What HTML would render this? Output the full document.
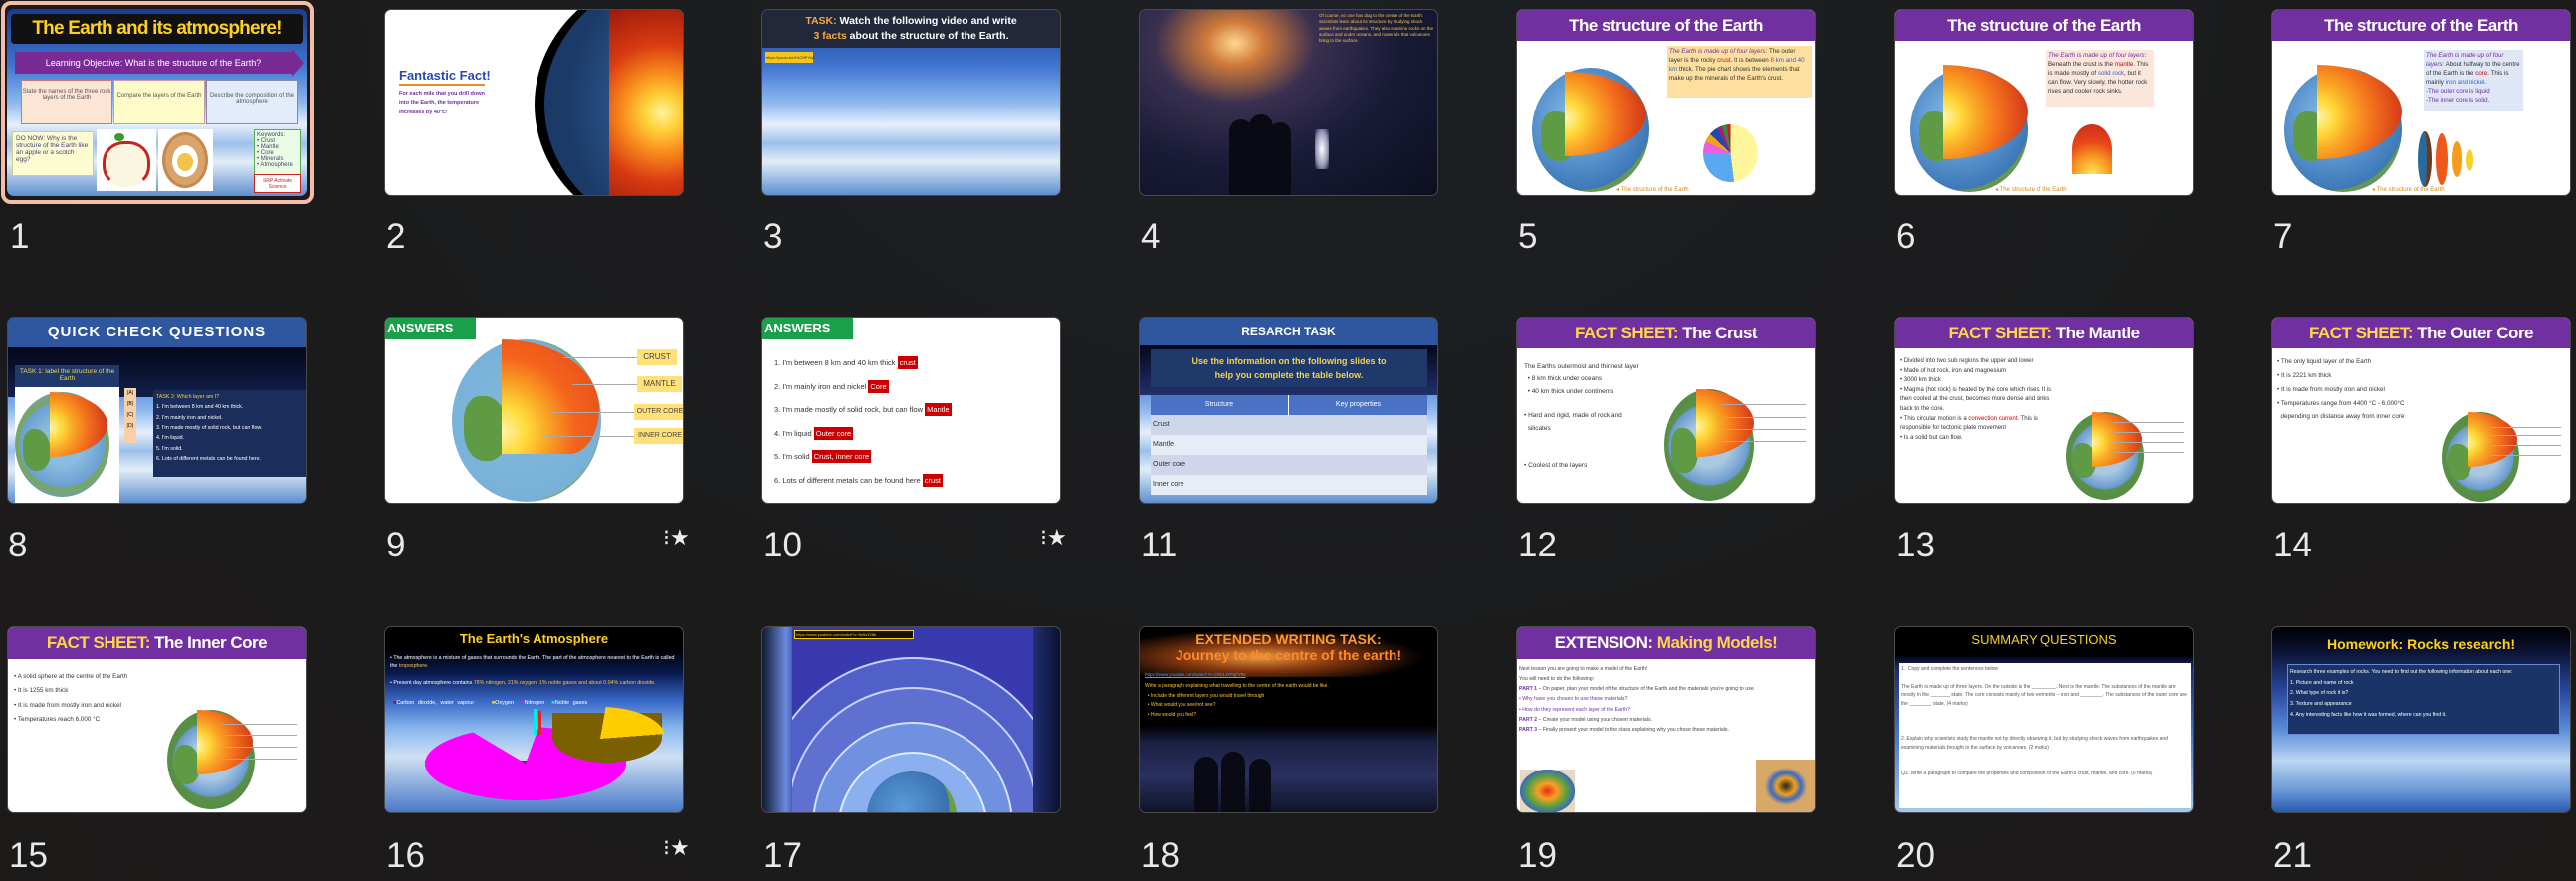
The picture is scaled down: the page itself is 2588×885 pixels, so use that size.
<!DOCTYPE html>
<html><head><meta charset="utf-8">
<style>
*{margin:0;padding:0;box-sizing:border-box}
html,body{width:2588px;height:885px;overflow:hidden}
body{background:radial-gradient(ellipse at 50% 0%,#1d2024 0%,#1b1b1c 55%,#1c1a19 100%);font-family:"Liberation Sans Narrow","Liberation Sans",sans-serif;position:relative}
.s{position:absolute;width:301px;height:188px;border-radius:7px;overflow:hidden;border:1px solid #4a4a4a;background:#fff}
.n{position:absolute;color:#e8e8e8;font-family:"Liberation Sans Narrow","Liberation Sans",sans-serif;font-size:35px;font-weight:300;line-height:1}
.st{position:absolute;color:#eee;font-size:22px}
.a{position:absolute}
.ph{position:absolute;left:0;top:0;width:100%;height:31px;background:#7030a0;color:#fff;font-weight:bold;font-size:17px;text-align:center;line-height:31px;white-space:nowrap;letter-spacing:-0.5px}
.ph b{color:#ffd34a}
.sky{background:linear-gradient(180deg,#1b3a8c 0%,#3f74d0 30%,#8db8ee 50%,#e6f0fb 62%,#9cc0ea 72%,#e2edf8 82%,#5e8fd0 100%)}
.earth{position:absolute;border-radius:50%;background:radial-gradient(circle at 40% 40%,#8fc0e8 0%,#5b95cf 40%,#3d78b8 70%,#6a9a4c 72%,#3d78b8 90%);overflow:hidden}
.earth:before{content:"";position:absolute;left:8%;top:35%;width:30%;height:40%;background:#5f9a45;border-radius:40% 60% 50% 50%}
.cut{position:absolute;border-radius:0 100% 100% 0/0 50% 50% 0;background:radial-gradient(circle at 0% 55%,#fff6b0 0%,#ffd93a 18%,#f9a825 34%,#f4731c 55%,#d9441a 80%,#b8321a 100%)}
.t{position:absolute;font-size:6px;color:#333;line-height:1.35}
.lab{position:absolute;height:1px;background:#aaa}
</style></head><body>

<!-- selection -->
<div class="a" style="left:1px;top:1px;width:314px;height:204px;border:4px solid #f6bca8;border-radius:10px"></div>

<!-- 1 -->
<div class="s sky" style="left:7px;top:9px;border:none">
 <div class="a" style="left:4px;top:5px;width:293px;height:30px;background:#111;border-radius:4px;color:#ffd11c;font-weight:bold;font-size:19px;text-align:center;line-height:30px;letter-spacing:-0.8px">The Earth and its atmosphere!</div>
 <div class="a" style="left:8px;top:43px;width:278px;height:22px;background:#7a2a94;color:#fff;font-size:9px;line-height:22px;text-align:center">Learning Objective: What is the structure of the Earth?</div>
 <div class="a" style="left:286px;top:40px;border-left:12px solid #7a2a94;border-top:14px solid transparent;border-bottom:14px solid transparent"></div>
 <div class="a" style="left:14px;top:71px;width:92px;height:45px;background:#fde5d6;border:1px solid #c77;font-size:6px;text-align:center;padding-top:8px;color:#555">State the names of the three rock layers of the Earth</div>
 <div class="a" style="left:107px;top:71px;width:92px;height:45px;background:#fdfbc8;border:1px solid #c9a;font-size:6px;text-align:center;padding-top:12px;color:#555">Compare the layers of the Earth</div>
 <div class="a" style="left:200px;top:71px;width:92px;height:45px;background:#e3ecfb;border:1px solid #88a;font-size:6px;text-align:center;padding-top:12px;color:#555">Describe the composition of the atmosphere</div>
 <div class="a" style="left:5px;top:123px;width:82px;height:45px;background:#fdfbd0;border:1px solid #cc9;font-size:6.5px;color:#447;padding:3px">DO NOW: Why is the structure of the Earth like an apple or a scotch egg?</div>
 <div class="a" style="left:90px;top:121px;width:60px;height:62px;background:#fff"><div class="a" style="left:6px;top:12px;width:48px;height:46px;border-radius:45%;background:#fbf6e0;border:3px solid #c92222;border-bottom-color:#fbf6e0"></div><div class="a" style="left:18px;top:4px;width:10px;height:8px;background:#3a9a2a;border-radius:50%"></div></div>
 <div class="a" style="left:152px;top:121px;width:55px;height:62px;background:#fff"><div class="a" style="left:4px;top:3px;width:46px;height:56px;border-radius:50%;background:#d9a46a;border:3px solid #c5884e"></div><div class="a" style="left:14px;top:16px;width:26px;height:32px;border-radius:50%;background:#fff"></div><div class="a" style="left:19px;top:24px;width:16px;height:18px;border-radius:50%;background:#f2c24a"></div></div>
 <div class="a" style="left:248px;top:121px;width:47px;height:57px;background:#eafbe6;border:1px solid #5a5;font-size:6px;color:#446;padding:2px">Keywords:<br>• Crust<br>• Mantle<br>• Core<br>• Minerals<br>• Atmosphere</div>
 <div class="a" style="left:248px;top:166px;width:47px;height:19px;background:#fff;border:1px solid #c22;font-size:5px;color:#c22;text-align:center;padding-top:3px">SRP Activate Science</div>
</div>
<div class="n" style="left:10px;top:220px">1</div>

<!-- 2 -->
<div class="s" style="left:386px;top:9px">
 <div class="a" style="left:150px;top:-40px;width:300px;height:270px;border-radius:50%;background:#000"></div>
 <div class="a" style="left:160px;top:-40px;width:300px;height:270px;border-radius:50%;background:radial-gradient(circle at 60% 50%,#4a7ab0 0%,#2d5a90 40%,#1c3a68 70%)"></div>
 <div class="a" style="left:225px;top:0;width:76px;height:188px;background:radial-gradient(circle at 70% 55%,#fff4a0 0%,#ffd23a 15%,#f88a1c 35%,#d83a12 60%,#9a1a0a 100%)"></div>
 <div class="a" style="left:14px;top:58px;color:#2c4ab0;font-weight:bold;font-size:13px">Fantastic Fact!</div>
 <div class="a" style="left:14px;top:74px;width:86px;height:2px;background:#f08a2a"></div>
 <div class="a" style="left:14px;top:80px;width:95px;color:#7030a0;font-weight:bold;font-size:5.5px;line-height:1.7">For each mile that you drill down into the Earth, the temperature increases by 40°c!</div>
</div>
<div class="n" style="left:388px;top:220px">2</div>

<!-- 3 -->
<div class="s sky" style="left:765px;top:9px">
 <div class="a" style="left:0;top:0;width:100%;height:38px;background:#22283a;color:#fff;font-weight:bold;font-size:10.5px;text-align:center;line-height:15px;padding-top:4px"><span style="color:#f6a93b">TASK:</span> Watch the following video and write<br><span style="color:#f6a93b">3 facts</span> about the structure of the Earth.</div>
 <div class="a" style="left:3px;top:42px;width:48px;height:11px;background:#f4c51a;font-size:4px;color:#333;padding:3px 1px">https://youtu.be/K4OIfPYkA</div>
</div>
<div class="n" style="left:767px;top:220px">3</div>

<!-- 4 -->
<div class="s" style="left:1144px;top:9px;background:radial-gradient(ellipse at 32% 18%,#ffd790 0%,#d07a3a 10%,#3a3050 28%,#1a1c38 55%,#0c0e20 100%)">
 <div class="a" style="left:90px;top:110px;width:24px;height:78px;background:#0a0a14;border-radius:12px 12px 0 0"></div>
 <div class="a" style="left:110px;top:105px;width:24px;height:83px;background:#0a0a14;border-radius:12px 12px 0 0"></div>
 <div class="a" style="left:130px;top:113px;width:22px;height:75px;background:#0a0a14;border-radius:12px 12px 0 0"></div>
 <div class="a" style="left:176px;top:120px;width:14px;height:40px;background:radial-gradient(#fff,#99b 60%,transparent)"></div>
 <div class="a" style="left:180px;top:3px;width:115px;color:#f5c542;font-size:4.5px;line-height:1.4">Of course, no one has dug to the centre of the Earth. Scientists learn about its structure by studying shock waves from earthquakes. They also examine rocks on the surface and under oceans, and materials that volcanoes bring to the surface.</div>
</div>
<div class="n" style="left:1146px;top:220px">4</div>

<!-- 5,6,7 -->
<div class="s" style="left:1523px;top:9px">
 <div class="ph">The structure of the Earth</div>
 <div class="earth" style="left:15px;top:58px;width:118px;height:125px"></div>
 <div class="cut" style="left:48px;top:62px;width:82px;height:85px"></div>
 <div class="a" style="left:151px;top:36px;width:145px;height:52px;background:#fde0a0;font-size:6.2px;color:#333;padding:2px;line-height:1.45"><i style="color:#7030a0">The Earth is made up of four layers:</i> The outer layer is the rocky <span style="color:#c00">crust</span>. It is between <span style="color:#36c">8 km and 40 km</span> thick. The pie chart shows the elements that make up the minerals of the Earth's crust.</div>
 <div class="a" style="left:187px;top:115px;width:55px;height:58px;border-radius:50%;background:conic-gradient(#fff59a 0 48%,#5aa8f0 48% 75%,#e860e0 75% 82%,#f0a020 82% 87%,#1a4ab0 87% 92%,#a02080 92% 95%,#3a8a3a 95% 98%,#c02020 98%)"></div>
 <div class="t" style="left:100px;top:177px;color:#d08a20">◂ The structure of the Earth</div>
</div>
<div class="n" style="left:1525px;top:220px">5</div>

<div class="s" style="left:1903px;top:9px">
 <div class="ph">The structure of the Earth</div>
 <div class="earth" style="left:15px;top:58px;width:118px;height:125px"></div>
 <div class="cut" style="left:48px;top:55px;width:85px;height:95px"></div>
 <div class="a" style="left:152px;top:40px;width:108px;height:57px;background:#fbe6dc;font-size:6.2px;color:#333;padding:2px;line-height:1.45"><i style="color:#7030a0">The Earth is made up of four layers:</i> Beneath the crust is the <span style="color:#c00">mantle</span>. This is made mostly of <span style="color:#36c">solid rock</span>, but it can flow. Very slowly, the hotter rock rises and cooler rock sinks.</div>
 <div class="a" style="left:178px;top:115px;width:40px;height:50px;border-radius:50% 50% 0 0;background:radial-gradient(circle at 50% 100%,#ffe860 0%,#f9a025 30%,#e84818 60%,#c8281a)"></div>
 <div class="t" style="left:100px;top:177px;color:#d08a20">◂ The structure of the Earth</div>
</div>
<div class="n" style="left:1905px;top:220px">6</div>

<div class="s" style="left:2282px;top:9px">
 <div class="ph">The structure of the Earth</div>
 <div class="earth" style="left:12px;top:58px;width:118px;height:125px"></div>
 <div class="cut" style="left:45px;top:55px;width:85px;height:95px"></div>
 <div class="a" style="left:152px;top:40px;width:100px;height:62px;background:#dfe6f6;font-size:6.2px;color:#333;padding:2px;line-height:1.45"><i style="color:#7030a0">The Earth is made up of four layers:</i> About halfway to the centre of the Earth is the <span style="color:#c00">core</span>. This is mainly <span style="color:#36c">iron and nickel</span>.<br><span style="color:#7030a0">-The outer core is liquid<br>-The inner core is solid.</span></div>
 <div class="a" style="left:146px;top:122px;width:14px;height:56px;border-radius:50%;background:#2a6a9a;border-right:5px solid #6a3a1a"></div>
 <div class="a" style="left:164px;top:124px;width:12px;height:52px;border-radius:50%;background:#f0581a"></div>
 <div class="a" style="left:180px;top:132px;width:10px;height:36px;border-radius:50%;background:#f89a1a"></div>
 <div class="a" style="left:194px;top:140px;width:8px;height:22px;border-radius:50%;background:#f8d02a"></div>
 <div class="t" style="left:100px;top:177px;color:#d08a20">◂ The structure of the Earth</div>
</div>
<div class="n" style="left:2284px;top:220px">7</div>

<!-- Row 2 -->
<!-- 8 -->
<div class="s sky" style="left:7px;top:318px">
 <div class="a" style="left:0;top:0;width:100%;height:30px;background:#2f57a0;color:#fff;font-weight:bold;font-size:15px;text-align:center;line-height:30px;letter-spacing:1px">QUICK CHECK QUESTIONS</div>
 <div class="a" style="left:0;top:30px;width:100%;height:50px;background:linear-gradient(#05071a,#10204a)"></div>
 <div class="a" style="left:7px;top:48px;width:105px;height:140px;background:#fff"></div>
 <div class="a" style="left:7px;top:48px;width:105px;height:22px;background:#1f3a6a;color:#f5d24a;font-size:6.5px;text-align:center;padding-top:3px">TASK 1: label the structure of the Earth</div>
 <div class="earth" style="left:7px;top:75px;width:95px;height:105px;background:radial-gradient(circle,#8abbe0 30%,#6aa0d0 60%,#7aa855 62%,#6a9ad0 80%)"></div>
 <div class="cut" style="left:42px;top:75px;width:58px;height:65px"></div>
 <div class="a" style="left:117px;top:71px;width:12px;height:55px;background:#f9cfa6;font-size:5px;line-height:11px;text-align:center">(A)<br>(B)<br>(C)<br>(D)</div>
 <div class="a" style="left:146px;top:73px;width:154px;height:87px;background:#1b2d5a;color:#fff;font-size:5.3px;padding:2px 3px;line-height:1.95"><span style="color:#f5d24a">TASK 2: Which layer am I?</span><br>1. I'm between 8 km and 40 km thick.<br>2. I'm mainly iron and nickel.<br>3. I'm made mostly of solid rock, but can flow.<br>4. I'm liquid.<br>5. I'm solid.<br>6. Lots of different metals can be found here.</div>
</div>
<div class="n" style="left:8px;top:530px">8</div>

<!-- 9 -->
<div class="s" style="left:386px;top:318px">
 <div class="a" style="left:0;top:0;width:91px;height:22px;background:#1aa04a;color:#fff;font-weight:bold;font-size:13px;line-height:22px;padding-left:2px">ANSWERS</div>
 <div class="earth" style="left:67px;top:22px;width:150px;height:163px;background:radial-gradient(circle at 45% 50%,#83b9dc 0%,#78b0d8 70%,#7aa656 72%,#7aa656 100%)"></div>
 <div class="cut" style="left:117px;top:22px;width:98px;height:115px;border-radius:0 100% 30% 0/0 60% 40% 0;background:radial-gradient(circle at 0% 80%,#fff4a8 0%,#ffdc3c 18%,#f9a825 34%,#f4641c 55%,#e04418 100%)"></div>
 <div class="a" style="left:253px;top:32px;width:40px;height:16px;background:#ffe079;font-size:8px;line-height:16px;text-align:center;color:#444">CRUST</div>
 <div class="a" style="left:253px;top:59px;width:45px;height:16px;background:#ffe079;font-size:8px;line-height:16px;text-align:center;color:#444">MANTLE</div>
 <div class="a" style="left:250px;top:87px;width:52px;height:16px;background:#ffe079;font-size:7px;line-height:16px;text-align:center;color:#444">OUTER CORE</div>
 <div class="a" style="left:250px;top:111px;width:52px;height:16px;background:#ffe079;font-size:7px;line-height:16px;text-align:center;color:#444">INNER CORE</div>
 <div class="lab" style="left:178px;top:40px;width:75px"></div><div class="lab" style="left:188px;top:67px;width:65px"></div><div class="lab" style="left:168px;top:95px;width:82px"></div><div class="lab" style="left:160px;top:119px;width:90px"></div>
</div>
<div class="n" style="left:388px;top:530px">9</div>
<div class="st" style="left:666px;top:527px">⁝★</div>

<!-- 10 -->
<div class="s" style="left:765px;top:318px">
 <div class="a" style="left:0;top:0;width:91px;height:22px;background:#1aa04a;color:#fff;font-weight:bold;font-size:13px;line-height:22px;padding-left:2px">ANSWERS</div>
 <div class="a" style="left:12px;top:34px;font-size:7.5px;color:#333;line-height:23.5px">
 1. I'm between 8 km and 40 km thick <span style="background:#c00;color:#fff;padding:2px">crust</span><br>
 2. I'm mainly iron and nickel <span style="background:#c00;color:#fff;padding:2px">Core</span><br>
 3. I'm made mostly of solid rock, but can flow <span style="background:#c00;color:#fff;padding:2px">Mantle</span><br>
 4. I'm liquid <span style="background:#c00;color:#fff;padding:2px">Outer core</span><br>
 5. I'm solid <span style="background:#c00;color:#fff;padding:2px">Crust, inner core</span><br>
 6. Lots of different metals can be found here <span style="background:#c00;color:#fff;padding:2px">crust</span></div>
</div>
<div class="n" style="left:767px;top:530px">10</div>
<div class="st" style="left:1045px;top:527px">⁝★</div>

<!-- 11 -->
<div class="s sky" style="left:1144px;top:318px">
 <div class="a" style="left:0;top:0;width:100%;height:28px;background:#2f57a0;color:#fff;font-weight:bold;font-size:12px;text-align:center;line-height:28px">RESARCH TASK</div>
 <div class="a" style="left:0;top:28px;width:100%;height:50px;background:linear-gradient(#05071a,#20306a)"></div>
 <div class="a" style="left:11px;top:32px;width:278px;height:38px;background:#1f3a6a;color:#f5d24a;font-size:9px;text-align:center;line-height:14px;padding-top:5px;font-weight:bold">Use the information on the following slides to<br>help you complete the table below.</div>
 <div class="a" style="left:11px;top:78px;width:278px;height:100px;font-size:7px;color:#333">
  <div style="height:20px;background:#4a72c4;color:#fff;display:flex;line-height:20px"><div style="width:50%;text-align:center;border-right:1px solid #fff">Structure</div><div style="width:50%;text-align:center">Key properties</div></div>
  <div style="height:20px;background:#cfd6ea;line-height:20px;padding-left:2px">Crust</div>
  <div style="height:20px;background:#e8ecf6;line-height:20px;padding-left:2px">Mantle</div>
  <div style="height:20px;background:#cfd6ea;line-height:20px;padding-left:2px">Outer core</div>
  <div style="height:20px;background:#e8ecf6;line-height:20px;padding-left:2px">Inner core</div>
 </div>
</div>
<div class="n" style="left:1146px;top:530px">11</div>

<!-- 12 -->
<div class="s" style="left:1523px;top:318px">
 <div class="ph" style="font-size:17px"><b>FACT SHEET:</b> The Crust</div>
 <div class="t" style="left:7px;top:44px;font-size:6.5px;line-height:1.9">The Earths outermost and thinnest layer<br>&nbsp;&nbsp;• 8 km thick under oceans<br>&nbsp;&nbsp;• 40 km thick under continents<br><br>• Hard and rigid, made of rock and<br>&nbsp;&nbsp;silicates<br><br><br>• Coolest of the layers</div>
 <div class="earth" style="left:148px;top:72px;width:90px;height:112px;background:radial-gradient(circle,#aac8e0 30%,#6a9ad0 55%,#5a9048 58%,#4a8a3c 100%)"></div>
 <div class="cut" style="left:180px;top:72px;width:58px;height:68px"></div>
 <div class="lab" style="left:205px;top:87px;width:85px"></div><div class="lab" style="left:205px;top:100px;width:85px"></div><div class="lab" style="left:205px;top:112px;width:85px"></div><div class="lab" style="left:205px;top:124px;width:85px"></div>
</div>
<div class="n" style="left:1525px;top:530px">12</div>

<!-- 13 -->
<div class="s" style="left:1903px;top:318px">
 <div class="ph"><b>FACT SHEET:</b> The Mantle</div>
 <div class="t" style="left:5px;top:40px;width:160px;font-size:6px;line-height:1.6">• Divided into two sub regions the upper and lower<br>• Made of hot rock, iron and magnesium<br>• 3000 km thick<br>• Magma (hot rock) is heated by the core which rises. It is then cooled at the crust, becomes more dense and sinks back to the core.<br>• This circular motion is a <span style="color:#c00">convection current</span>. This is responsible for tectonic plate movement<br>• Is a solid but can flow.</div>
 <div class="earth" style="left:172px;top:95px;width:78px;height:88px;background:radial-gradient(circle,#aac8e0 30%,#6a9ad0 55%,#5a9048 58%,#4a8a3c 100%)"></div>
 <div class="cut" style="left:198px;top:95px;width:50px;height:55px"></div>
 <div class="lab" style="left:220px;top:105px;width:70px"></div><div class="lab" style="left:220px;top:115px;width:70px"></div><div class="lab" style="left:220px;top:125px;width:70px"></div><div class="lab" style="left:220px;top:135px;width:70px"></div>
</div>
<div class="n" style="left:1905px;top:530px">13</div>

<!-- 14 -->
<div class="s" style="left:2282px;top:318px">
 <div class="ph"><b>FACT SHEET:</b> The Outer Core</div>
 <div class="t" style="left:5px;top:38px;width:200px;font-size:6.3px;line-height:2.2">• The only liquid layer of the Earth<br>• It is 2221 km thick<br>• It is made from mostly iron and nickel<br>• Temperatures range from 4400 °C - 6,000°C<br>&nbsp;&nbsp;depending on distance away from inner core</div>
 <div class="earth" style="left:170px;top:95px;width:78px;height:90px;background:radial-gradient(circle,#aac8e0 30%,#6a9ad0 55%,#5a9048 58%,#4a8a3c 100%)"></div>
 <div class="cut" style="left:196px;top:95px;width:50px;height:55px"></div>
 <div class="lab" style="left:220px;top:110px;width:70px"></div><div class="lab" style="left:220px;top:118px;width:70px"></div><div class="lab" style="left:220px;top:128px;width:70px"></div><div class="lab" style="left:220px;top:138px;width:70px"></div>
</div>
<div class="n" style="left:2284px;top:530px">14</div>

<!-- Row 3 -->
<!-- 15 -->
<div class="s" style="left:7px;top:629px">
 <div class="ph" style="height:32px;line-height:32px"><b>FACT SHEET:</b> The Inner Core</div>
 <div class="t" style="left:6px;top:43px;font-size:6.3px;line-height:2.3">• A solid sphere at the centre of the Earth<br>• It is 1255 km thick<br>• It is made from mostly iron and nickel<br>• Temperatures reach 6,000 °C</div>
 <div class="earth" style="left:160px;top:83px;width:88px;height:100px;background:radial-gradient(circle,#aac8e0 30%,#6a9ad0 55%,#5a9048 58%,#4a8a3c 100%)"></div>
 <div class="cut" style="left:190px;top:83px;width:56px;height:65px"></div>
 <div class="lab" style="left:215px;top:97px;width:75px"></div><div class="lab" style="left:215px;top:108px;width:75px"></div><div class="lab" style="left:215px;top:120px;width:75px"></div><div class="lab" style="left:215px;top:132px;width:75px"></div>
</div>
<div class="n" style="left:9px;top:842px">15</div>

<!-- 16 -->
<div class="s" style="left:386px;top:629px;background:linear-gradient(180deg,#000 0%,#000 12%,#0a1a50 25%,#3a6ac8 40%,#8ab8ee 55%,#cfe0f4 70%,#4a7ac8 100%)">
 <div class="a" style="left:0;top:4px;width:100%;text-align:center;color:#ffd11c;font-weight:bold;font-size:13px">The Earth's Atmosphere</div>
 <div class="a" style="left:5px;top:27px;width:292px;color:#fff;font-size:5.3px;line-height:1.55">• The atmosphere is a mixture of gases that surrounds the Earth. The part of the atmosphere nearest to the Earth is called the <span style="color:#f5c542">troposphere.</span><br><br>• Present day atmosphere contains <span style="color:#f5c542">78% nitrogen, 21% oxygen, 1% noble gases and about 0.04% carbon dioxide.</span></div>
 <div class="a" style="left:8px;top:73px;width:290px;color:#fff;font-size:5.5px;word-spacing:2px"><span style="color:#c00">■</span>Carbon dioxide, water vapour &nbsp;&nbsp;&nbsp;&nbsp;<span style="color:#fc0">■</span>Oxygen &nbsp;<span style="color:#f0f">■</span>Nitrogen &nbsp;<span style="color:#0ee">■</span>Noble gases</div>
 <div class="a" style="left:40px;top:134px;width:202px;height:40px;background:#9a009a;border-radius:0 0 50% 50%/0 0 100% 100%"></div>
 <div class="a" style="left:40px;top:100px;width:202px;height:74px;border-radius:50%;background:conic-gradient(from 20deg,#ff00ff 0 78%,transparent 78%)"></div>
 <div class="a" style="left:168px;top:86px;width:110px;height:50px;background:#7a6000;border-radius:0 0 50% 50%"></div>
 <div class="a" style="left:150px;top:80px;width:132px;height:64px;border-radius:50%;background:conic-gradient(from 10deg,#fc0 0 21%,transparent 21%)"></div>
 <div class="a" style="left:149px;top:82px;width:3px;height:26px;background:#0ee"></div>
 <div class="a" style="left:154px;top:84px;width:3px;height:24px;background:#e22"></div>
</div>
<div class="n" style="left:388px;top:842px">16</div>
<div class="st" style="left:666px;top:839px">⁝★</div>

<!-- 17 -->
<div class="s" style="left:765px;top:629px;background:linear-gradient(90deg,#101830 0%,#6a8ae0 8%,#2a3a8a 12%,#2a3a8a 88%,#0a1030 100%)">
 <div class="a" style="left:30px;top:0;width:242px;height:188px;background:#3a3ab0;overflow:hidden">
  <div class="a" style="left:-30px;top:30px;width:302px;height:300px;border-radius:50%;background:#5060c8;border:2px solid #c8d0ff"></div>
  <div class="a" style="left:-5px;top:60px;width:252px;height:260px;border-radius:50%;background:#6070d0;border:2px solid #c8d0ff"></div>
  <div class="a" style="left:20px;top:95px;width:202px;height:210px;border-radius:50%;background:#7090e0;border:2px solid #d0e0ff"></div>
  <div class="a" style="left:45px;top:125px;width:152px;height:160px;border-radius:50%;background:#8ab0f0;border:2px solid #e0ecff"></div>
  <div class="a" style="left:75px;top:145px;width:90px;height:90px;border-radius:50%;background:radial-gradient(circle at 40% 40%,#5a9ad8,#3a70b0 60%,#6aa040 62%)"></div>
 </div>
 <div class="a" style="left:32px;top:3px;width:120px;height:9px;background:#111;border:1px solid #fc0;color:#fc0;font-size:4px;padding:1px">https://www.youtube.com/watch?v=9x5x1V8k</div>
</div>
<div class="n" style="left:767px;top:842px">17</div>

<!-- 18 -->
<div class="s" style="left:1144px;top:629px;background:linear-gradient(180deg,#000 0%,#000 53%,#1a2040 62%,#2a3060 80%,#101428 100%)">
 <div class="a" style="left:0;top:0;width:100%;height:50px;background:radial-gradient(ellipse at 40% 60%,#e89a40 0%,#8a3a10 30%,#000 65%)"></div>
 <div class="a" style="left:0;top:4px;width:100%;text-align:center;color:#ff9a2a;font-weight:bold;font-size:14px;line-height:16px">EXTENDED WRITING TASK:<br><span style="color:#f9a0ff;color:#ff8a2a">Journey to the centre of the earth!</span></div>
 <div class="a" style="left:5px;top:45px;color:#4af;font-size:4.5px;text-decoration:underline">https://www.youtube.com/watch?v=OW1JXPqhY8s</div>
 <div class="a" style="left:5px;top:55px;width:290px;color:#f5c542;font-size:5px;line-height:1.9">Write a paragraph explaining what travelling to the centre of the earth would be like.<br>&nbsp;&nbsp;• Include the different layers you would travel through<br>&nbsp;&nbsp;• What would you see/not see?<br>&nbsp;&nbsp;• How would you feel?</div>
 <div class="a" style="left:55px;top:130px;width:24px;height:58px;background:#0a0a14;border-radius:12px 12px 0 0"></div>
 <div class="a" style="left:82px;top:125px;width:24px;height:63px;background:#0a0a14;border-radius:12px 12px 0 0"></div>
 <div class="a" style="left:110px;top:132px;width:22px;height:56px;background:#0a0a14;border-radius:12px 12px 0 0"></div>
</div>
<div class="n" style="left:1146px;top:842px">18</div>

<!-- 19 -->
<div class="s" style="left:1523px;top:629px">
 <div class="ph" style="height:32px;line-height:32px"><span style="color:#fff">EXTENSION: </span><b>Making Models!</b></div>
 <div class="t" style="left:2px;top:37px;width:295px;font-size:5.2px;line-height:1.95;color:#444">Next lesson you are going to make a model of the Earth!<br>You will need to do the following:<br><b style="color:#7030a0">PART 1</b> – On paper, plan your model of the structure of the Earth and the materials you're going to use.<br><span style="color:#7030a0">• Why have you chosen to use these materials?<br>• How do they represent each layer of the Earth?</span><br><b style="color:#7030a0">PART 2</b> – Create your model using your chosen materials.<br><b style="color:#7030a0">PART 3</b> – Finally present your model to the class explaining why you chose those materials.</div>
 <div class="a" style="left:3px;top:143px;width:55px;height:44px;background:radial-gradient(ellipse,#e82a1a 0%,#f8a020 25%,#5aa040 50%,#3a6ac0 70%,#e8d8c0 72%)"></div>
 <div class="a" style="left:240px;top:133px;width:60px;height:54px;background:radial-gradient(ellipse,#222 0%,#f0a020 22%,#3a6ac0 36%,#d8a868 50%)"></div>
</div>
<div class="n" style="left:1525px;top:842px">19</div>

<!-- 20 -->
<div class="s" style="left:1903px;top:629px;background:linear-gradient(180deg,#000 0%,#000 15%,#1a2a70 22%,#4a7ad0 60%,#a8c8f0 100%)">
 <div class="a" style="left:0;top:5px;width:100%;text-align:center;color:#f5d21c;font-size:13px">SUMMARY QUESTIONS</div>
 <div class="a" style="left:4px;top:36px;width:293px;height:146px;background:#fff;padding:2px;font-size:5px;color:#555;line-height:1.75">
 1. &nbsp;Copy and complete the sentences below<br><br>The Earth is made up of three layers. On the outside is the _________. Next is the mantle. The substances of the mantle are mostly in the _______ state. The core consists mainly of two elements – iron and ________. The substances of the outer core are the ________ state. (4 marks)<br><br><br><br>2. Explain why scientists study the mantle not by directly observing it, but by studying shock waves from earthquakes and examining materials brought to the surface by volcanoes. (2 marks)<br><br><br>Q3. Write a paragraph to compare the properties and composition of the Earth's crust, mantle, and core. (6 marks)</div>
</div>
<div class="n" style="left:1905px;top:842px">20</div>

<!-- 21 -->
<div class="s" style="left:2282px;top:629px;background:linear-gradient(180deg,#000 0%,#0a1030 12%,#2a4aa0 35%,#5a8ad8 55%,#bcd6f2 72%,#6a9ad8 88%,#2a5ab0 100%)">
 <div class="a" style="left:0;top:9px;width:100%;text-align:center;color:#ffd11c;font-weight:bold;font-size:14px">Homework: Rocks research!</div>
 <div class="a" style="left:15px;top:37px;width:274px;height:71px;background:#1b3468;border:1px solid #6a8ad0;color:#fff;font-size:5.2px;line-height:2.05;padding:2px">Research three examples of rocks. You need to find out the following information about each one:<br>1. Picture and name of rock<br>2. What type of rock it is?<br>3. Texture and appearance<br>4. Any interesting facts like how it was formed, where can you find it.</div>
</div>
<div class="n" style="left:2284px;top:842px">21</div>

</body></html>
